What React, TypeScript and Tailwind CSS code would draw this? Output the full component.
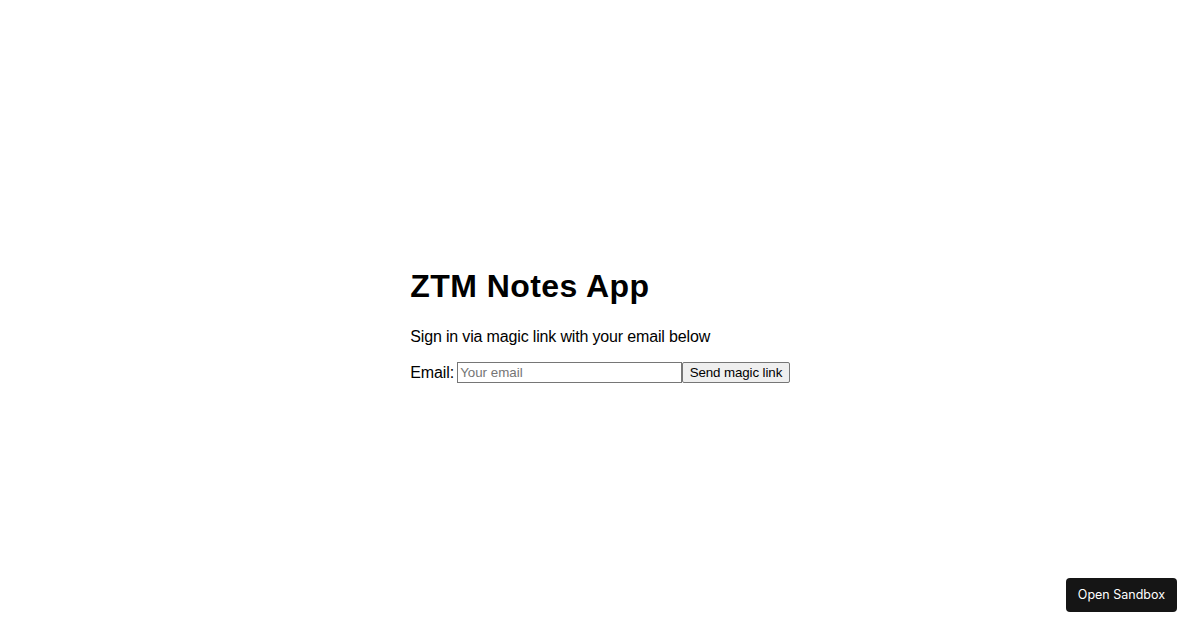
export default function App() {
  return (
    <div className="flex min-h-screen items-center justify-center bg-white font-['Liberation_Sans',Arial,sans-serif] text-black">
      <div className="mt-[21px]">
        <h1 className="text-[32px] leading-[37px] font-bold tracking-[0.45px]">ZTM Notes App</h1>
        <p className="mt-[23px] text-base leading-[18px] tracking-[-0.16px]">
          Sign in via magic link with your email below
        </p>
        <form className="mt-[16px] flex items-center">
          <label htmlFor="email" className="mr-[3px] text-base leading-[18px] tracking-[-0.1px]">
            Email:
          </label>
          <input
            id="email"
            type="email"
            placeholder="Your email"
            className="h-[21px] w-[225px] border border-[#767676] px-[2px] text-[13.33px] leading-[15px] placeholder:text-[#757575]"
          />
          <button
            type="button"
            className="h-[21px] rounded-[2px] border border-[#767676] bg-[#efefef] px-[6.5px] text-[13.33px] leading-[15px] tracking-[-0.1px]"
          >
            Send magic link
          </button>
        </form>
      </div>
      <button
        type="button"
        className="fixed right-[23px] bottom-[18px] h-[34px] rounded-[4px] bg-[#151515] px-[12px] font-['Inter',sans-serif] text-[12.5px] text-white"
      >
        Open Sandbox
      </button>
    </div>
  );
}
